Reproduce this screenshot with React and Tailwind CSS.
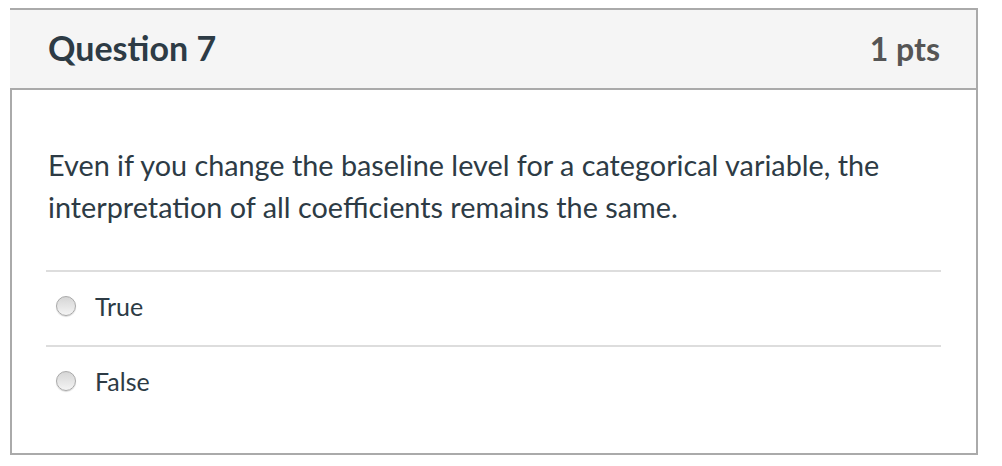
import React from 'react';

function Radio() {
  return (
    <span className="inline-block w-[20px] h-[20px] rounded-full border border-[#a9a9a9] bg-gradient-to-b from-[#d6d6d6] to-[#f4f4f4] shadow-[0_1px_1px_rgba(0,0,0,0.15)] shrink-0" />
  );
}

export default function App() {
  const answers = ['True', 'False'];
  return (
    <div className="w-[1002px] h-[466px] bg-white pt-2 pl-[10px] font-['Lato','Noto_Sans',sans-serif]">
      <div className="w-[968px]">
        <div className="h-[80px] bg-[#f5f5f5] border-t-2 border-r-2 border-[#aaaaaa] flex items-center justify-between pl-[38px] pr-[36px]">
          <h2 className="text-[34px] font-bold text-[#2d3b45] leading-none mt-[-2px]">Question 7</h2>
          <span className="text-[32px] font-bold text-[#555555] leading-none">1 pts</span>
        </div>
        <div className="h-[367px] border-2 border-[#aaaaaa] pl-[34px] pr-[35px] pt-[54px]">
          <p className="text-[28.8px] leading-[42px] text-[#2d3b45] pl-[2px]">
            Even if you change the baseline level for a categorical variable, the interpretation of all coefficients remains the same.
          </p>
          <div className="mt-[42px]">
            {answers.map((a) => (
              <div key={a} className="border-t-2 border-[#dddddd] h-[75px] pt-[19px] pl-[10px]">
                <div className="flex items-center gap-[19px] h-[30px]">
                  <Radio />
                  <span className="text-[25px] leading-[30px] text-[#2d3b45]">{a}</span>
                </div>
              </div>
            ))}
          </div>
        </div>
      </div>
    </div>
  );
}
